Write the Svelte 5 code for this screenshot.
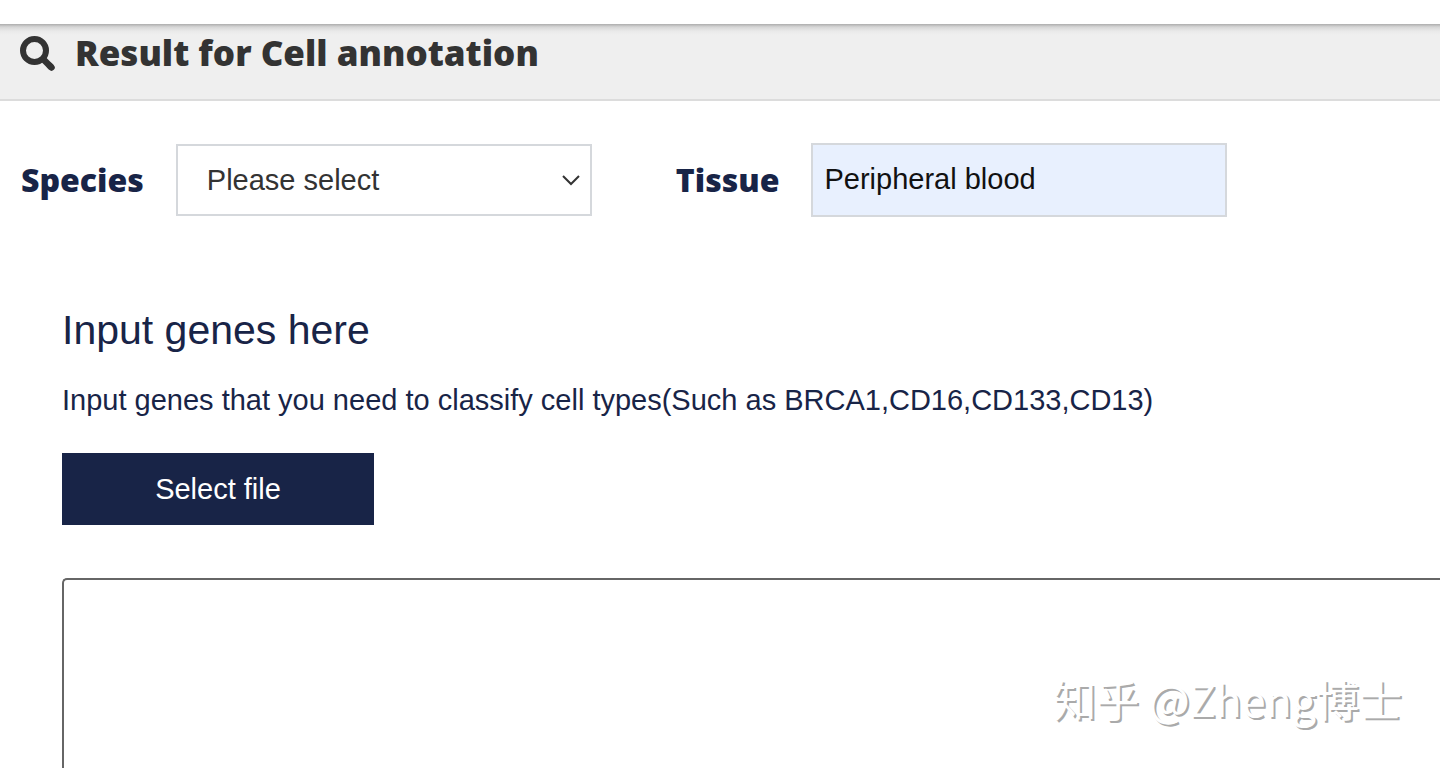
<script>
  let species = $state('');
  let tissue = $state('Peripheral blood');
  let genes = $state('');
  let fileInput;
</script>

<div class="page">
  <header class="title-bar">
    <svg class="search-icon" viewBox="0 0 36 36" aria-hidden="true">
      <circle cx="14.5" cy="14.5" r="11.5" fill="none" stroke="currentColor" stroke-width="6" />
      <path d="M22.5 22.5 L31.5 31.5" stroke="currentColor" stroke-width="6.5" />
      <path d="M30 30 L31.5 31.5" stroke="currentColor" stroke-width="6.5" stroke-linecap="round" />
    </svg>
    <h1>Result for Cell annotation</h1>
  </header>

  <div class="filters">
    <div class="field">
      <label for="species">Species</label>
      <div class="select-wrap">
        <select id="species" bind:value={species}>
          <option value="">Please select</option>
          <option value="human">Human</option>
          <option value="mouse">Mouse</option>
        </select>
        <svg class="chevron" viewBox="0 0 20 12" aria-hidden="true">
          <path d="M2 2 L10 10 L18 2" fill="none" stroke="currentColor" stroke-width="2" />
        </svg>
      </div>
    </div>
    <div class="field">
      <label for="tissue">Tissue</label>
      <input id="tissue" type="text" bind:value={tissue} />
    </div>
  </div>

  <section class="genes">
    <h2><label for="genes">Input genes here</label></h2>
    <p>Input genes that you need to classify cell types(Such as BRCA1,CD16,CD133,CD13)</p>
    <button type="button" onclick={() => fileInput.click()}>Select file</button>
    <input type="file" hidden bind:this={fileInput} />
    <textarea id="genes" bind:value={genes}></textarea>
  </section>

  <div class="watermark">知乎 @Zheng博士</div>
</div>

<style>
  :global(body) {
    margin: 0;
    background: #fff;
  }

  .page {
    position: relative;
    display: flex;
    flex-direction: column;
    min-height: 100vh;
    box-sizing: border-box;
    padding-top: 24px;
    overflow: hidden;
    color: #182447;
    font-family: "Liberation Sans", Arial, sans-serif;
    font-size: 29px;
  }

  .title-bar {
    display: flex;
    align-items: flex-start;
    gap: 19px;
    box-sizing: border-box;
    padding: 12px 20px 27px;
    border-bottom: 2px solid #dcdcdc;
    background: linear-gradient(#adadad, #d6d6d6 3px, #e9e9e9 7px, #efefef 11px);
    color: #333;
  }

  .search-icon {
    width: 36px;
    height: 36px;
  }

  h1 {
    margin: 0;
    font-family: "Open Sans", "Arial Black", sans-serif;
    font-size: 35px;
    font-weight: 800;
    line-height: 34px;
  }

  .filters {
    display: flex;
    align-items: center;
    gap: 84px;
    padding: 42px 21px 0;
  }

  .field {
    display: flex;
    align-items: center;
    gap: 32px;
  }

  .field label {
    font-family: "Open Sans", "Arial Black", sans-serif;
    font-size: 32px;
    font-weight: 800;
    line-height: 36px;
  }

  .select-wrap {
    position: relative;
  }

  select,
  .field input {
    display: block;
    width: 416px;
    box-sizing: border-box;
    border: 2px solid #d5d8dc;
    border-radius: 0;
    font: inherit;
  }

  select {
    height: 72px;
    padding: 0 48px 0 29px;
    appearance: none;
    background: #fff;
    color: #333;
  }

  .field input {
    height: 74px;
    padding: 0 11px 2px;
    background: #e8f0fe;
    color: #111;
  }

  .chevron {
    position: absolute;
    top: 30px;
    right: 11px;
    width: 20px;
    height: 12px;
    color: #333;
    pointer-events: none;
  }

  .genes {
    display: flex;
    flex: 1;
    flex-direction: column;
    align-items: flex-start;
    padding: 89px 0 0 62px;
  }

  h2 {
    margin: 0;
    font-size: 41px;
    font-weight: 400;
    line-height: 48px;
  }

  p {
    margin: 30px 0 36px;
    line-height: 33px;
  }

  button {
    width: 312px;
    height: 72px;
    border: 0;
    background: #182447;
    color: #fff;
    font: inherit;
    cursor: pointer;
  }

  textarea {
    flex: 1;
    width: 100%;
    box-sizing: border-box;
    margin: 53px 0 0;
    padding: 12px;
    border: solid #666;
    border-width: 2px 0 0 2px;
    border-radius: 5px 0 0;
    outline: 0;
    resize: none;
    font: inherit;
  }

  .watermark {
    position: absolute;
    right: 38px;
    bottom: 40px;
    color: #fff;
    font-family: "Noto Sans CJK SC", sans-serif;
    font-size: 43px;
    line-height: 60px;
    text-shadow: 2px 2px 0 #aaa;
    pointer-events: none;
  }
</style>
